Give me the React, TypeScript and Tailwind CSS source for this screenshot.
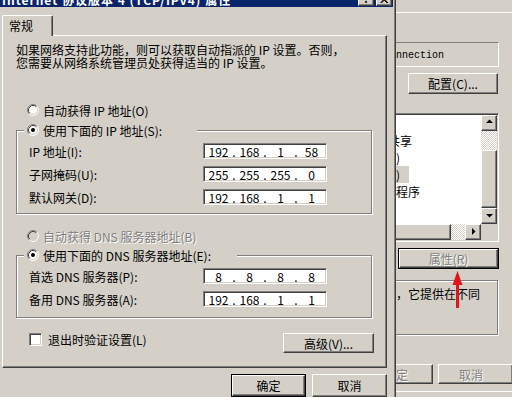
import React from "react";

const SUNKEN =
  "border border-t-[#808080] border-l-[#808080] border-b-white border-r-white shadow-[inset_1px_1px_0_#404040,inset_-1px_-1px_0_#d4d0c8]";
const RAISED =
  "border border-t-white border-l-white border-b-[#404040] border-r-[#404040] shadow-[inset_-1px_-1px_0_#808080,inset_1px_1px_0_#d4d0c8]";
const ETCHED = "border border-[#808080] shadow-[inset_1px_1px_0_#fff,1px_1px_0_#fff]";
const DISABLED = "text-[#808080] [text-shadow:1px_1px_0_#fff]";
const HATCH =
  "bg-[image:repeating-conic-gradient(#d4d0c8_0_25%,#ffffff_0_50%)] bg-[length:2px_2px]";

function Radio({ checked, disabled }: { checked?: boolean; disabled?: boolean }) {
  return (
    <svg width="12" height="12" viewBox="0 0 12 12" className="shrink-0">
      <circle cx="6" cy="6" r="5" fill={disabled ? "#d4d0c8" : "#fff"} />
      <path d="M2.11 9.89A5.5 5.5 0 0 1 9.89 2.11" fill="none" stroke="#808080" />
      <path d="M9.89 2.11A5.5 5.5 0 0 1 2.11 9.89" fill="none" stroke="#fff" />
      <path d="M2.82 9.18A4.5 4.5 0 0 1 9.18 2.82" fill="none" stroke="#404040" />
      <path d="M9.18 2.82A4.5 4.5 0 0 1 2.82 9.18" fill="none" stroke="#d4d0c8" />
      {checked && <circle cx="6" cy="6" r="2" fill="#000" />}
    </svg>
  );
}

function Button({
  label,
  className = "",
  isDefault,
  disabled,
}: {
  label: React.ReactNode;
  className?: string;
  isDefault?: boolean;
  disabled?: boolean;
}) {
  const inner = (
    <div
      className={`${RAISED} bg-[#d4d0c8] w-full h-full flex items-center justify-center whitespace-nowrap ${
        disabled ? DISABLED : ""
      }`}
    >
      {label}
    </div>
  );
  return isDefault ? (
    <div className={`border border-black shrink-0 ${className}`}>{inner}</div>
  ) : (
    <div className={`shrink-0 ${className}`}>{inner}</div>
  );
}

function IpBox({ parts }: { parts: string[] }) {
  return (
    <div className={`${SUNKEN} w-[124px] h-[16px] bg-white flex items-center px-[1px] shrink-0`}>
      {parts.map((p, i) => (
        <React.Fragment key={i}>
          {i > 0 && <span className="w-[4px] text-center">.</span>}
          <span className="w-[27px] text-center">{p}</span>
        </React.Fragment>
      ))}
    </div>
  );
}

function FieldRow({ label, parts }: { label: string; parts: string[] }) {
  return (
    <div className="h-[16px] flex items-center pl-[12px]">
      <span className="w-[174px] whitespace-nowrap">{label}</span>
      <IpBox parts={parts} />
    </div>
  );
}

function Arrow({ dir }: { dir: "up" | "down" | "right" }) {
  const pts =
    dir === "up" ? "4,7 11,7 7.5,3.5" : dir === "down" ? "4,5 11,5 7.5,8.5" : "6,3 6,10 9.5,6.5";
  return (
    <div className={`${RAISED} bg-[#d4d0c8] w-[16px] h-[16px] shrink-0`}>
      <svg width="14" height="14" viewBox="0 0 14 14">
        <polygon points={pts} fill="#000" />
      </svg>
    </div>
  );
}

export default function App() {
  return (
    <div className="relative w-[512px] h-[397px] overflow-hidden bg-[#d4d0c8] flex font-['Noto_Sans_CJK_SC','Liberation_Sans',sans-serif] text-[12px] leading-[13px] text-black">
      {/* front dialog */}
      <div className="w-[396px] h-full shrink-0 flex flex-col shadow-[inset_-1px_0_0_#404040,inset_-2px_0_0_#808080]">
        <div className="w-[393px] h-[10px] bg-[#0a246a] flex items-end justify-between overflow-hidden pl-[2px] pr-[1px]">
          <span className="mb-[1px] leading-[12px] font-bold text-white tracking-[1px] whitespace-nowrap">
            Internet 协议版本 4 (TCP/IPv4) 属性
          </span>
          <div className="flex gap-[2px] mb-[1px]">
            <div className={`${RAISED} bg-[#d4d0c8] w-[16px] h-[14px] flex items-center justify-center text-[10px] leading-[10px] font-bold`}>
              ?
            </div>
            <div className={`${RAISED} bg-[#d4d0c8] w-[16px] h-[14px] flex items-center justify-center`}>
              <svg width="8" height="7" viewBox="0 0 8 7">
                <path d="M0.5 0 L7 7 M1.5 0 L8 7 M7 0 L0.5 7 M8 0 L1.5 7" stroke="#000" strokeWidth="1" />
              </svg>
            </div>
          </div>
        </div>

        <div className="flex flex-col pt-[8px]">
          {/* tab */}
          <div className="relative z-10 ml-[2px] w-[51px] h-[21px] bg-[#d4d0c8] border-l border-t border-white border-r border-r-[#404040] rounded-t-[2px] shadow-[inset_-1px_0_0_#808080] pl-[6px] pt-[3px]">
            常规
          </div>

          {/* panel */}
          <div className="-mt-[1px] ml-[2px] w-[385px] h-[333px] flex flex-col border border-t-white border-l-white border-r-[#404040] border-b-[#404040] shadow-[inset_-1px_-1px_0_#808080] pt-[7px] pl-[13px] pr-[14px]">
            <p className="whitespace-nowrap">
              如果网络支持此功能，则可以获取自动指派的 IP 设置。否则，
              <br />
              您需要从网络系统管理员处获得适当的 IP 设置。
            </p>

            <div className="mt-[33px] ml-[11px] h-[16px] flex items-center gap-[4px]">
              <Radio />
              <span>自动获得 IP 地址(O)</span>
            </div>

            <div className={`${ETCHED} mt-[12px] flex flex-col pb-[8px]`}>
              <div className="-mt-[9px] ml-[7px] w-[173px] h-[16px] bg-[#d4d0c8] pl-[3px] flex items-center gap-[4px]">
                <Radio checked />
                <span className="whitespace-nowrap">使用下面的 IP 地址(S):</span>
              </div>
              <div className="mt-[5px] flex flex-col gap-[7px]">
                <FieldRow label="IP 地址(I):" parts={["192", "168", "1", "58"]} />
                <FieldRow label="子网掩码(U):" parts={["255", "255", "255", "0"]} />
                <FieldRow label="默认网关(D):" parts={["192", "168", "1", "1"]} />
              </div>
            </div>

            <div className="mt-[14px] ml-[11px] h-[16px] flex items-center gap-[4px]">
              <Radio disabled />
              <span className={DISABLED}>自动获得 DNS 服务器地址(B)</span>
            </div>

            <div className={`${ETCHED} mt-[11px] flex flex-col pb-[10px]`}>
              <div className="-mt-[9px] ml-[7px] w-[213px] h-[16px] bg-[#d4d0c8] pl-[3px] flex items-center gap-[4px]">
                <Radio checked />
                <span className="whitespace-nowrap">使用下面的 DNS 服务器地址(E):</span>
              </div>
              <div className="mt-[5px] flex flex-col gap-[7px]">
                <FieldRow label="首选 DNS 服务器(P):" parts={["8", "8", "8", "8"]} />
                <FieldRow label="备用 DNS 服务器(A):" parts={["192", "168", "1", "1"]} />
              </div>
            </div>

            <div className="mt-[15px] flex items-start justify-between">
              <div className="ml-[13px] flex items-center gap-[6px]">
                <div className={`${SUNKEN} w-[13px] h-[13px] bg-white`} />
                <span>退出时验证设置(L)</span>
              </div>
              <Button label="高级(V)..." className="w-[91px] h-[20px] -mr-[2px]" />
            </div>
          </div>

          <div className="mt-[6px] pr-[9px] flex justify-end gap-[6px]">
            <Button label="确定" isDefault className="w-[75px] h-[23px]" />
            <Button label="取消" className="w-[75px] h-[23px]" />
          </div>
        </div>
      </div>

      {/* background dialog */}
      <div className="w-[116px] h-full shrink-0 flex flex-col overflow-hidden">
        <div className="mt-[12px] border-t border-white" />

        <div className="mt-[29px] w-[103px] h-[25px] shrink-0 border-t border-t-[#808080] border-r border-r-white border-b border-b-white pt-[3px]">
          <span className="font-['Liberation_Mono',monospace] text-[10px] leading-[12px] whitespace-nowrap">
            nnection
          </span>
        </div>

        <Button label="配置(C)..." className="mt-[6px] ml-[12px] w-[90px] h-[21px]" />

        <div className="mt-[19px] w-[103px] h-[129px] shrink-0 flex flex-col border-t border-t-[#808080] border-r border-r-white border-b border-b-white shadow-[inset_0_1px_0_#404040,inset_-1px_-1px_0_#d4d0c8] pt-[1px] pr-[1px] pb-[1px]">
          <div className="h-[109px] flex">
            <div className="w-[85px] bg-white flex flex-col overflow-hidden">
              <div className="h-[17px]" />
              <div className="h-[17px] flex items-center whitespace-nowrap -ml-[8px]">共享</div>
              <div className="h-[17px] flex items-center">)</div>
              <div className="h-[17px] flex items-center">
                <span className="w-[13px] h-[17px] flex items-center bg-[#d4d0c8]">)</span>
              </div>
              <div className="h-[17px] flex items-center whitespace-nowrap">程序</div>
            </div>
            <div className="w-[16px] flex flex-col">
              <Arrow dir="up" />
              <div className={`${HATCH} h-[19px]`} />
              <div className={`${RAISED} bg-[#d4d0c8] h-[58px]`} />
              <Arrow dir="down" />
            </div>
          </div>
          <div className="h-[16px] flex">
            <div className={`${RAISED} border-l-0 bg-[#d4d0c8] w-[55px] h-[16px]`} />
            <div className={`${HATCH} w-[14px] h-[16px]`} />
            <Arrow dir="right" />
            <div className="w-[16px] h-[16px] bg-[#d4d0c8]" />
          </div>
        </div>

        <Button label="属性(R)" isDefault disabled className="mt-[6px] ml-[2px] w-[101px] h-[21px]" />

        <div className="mt-[11px] w-[102px] h-[55px] shrink-0 border-t border-r border-b border-[#808080] shadow-[inset_0_1px_0_#fff,1px_1px_0_#fff] pt-[6px] whitespace-nowrap">
          ，它提供在不同
        </div>

        <div className="mt-[29px] flex gap-[5px]">
          <div className="w-[37px] h-[20px] shrink-0">
            <div className={`${RAISED} border-l-0 bg-[#d4d0c8] w-full h-full flex items-center ${DISABLED}`}>定</div>
          </div>
          <div className="w-[75px] h-[20px] shrink-0">
            <div className={`${RAISED} bg-[#d4d0c8] w-full h-full flex items-center pl-[20px] ${DISABLED}`}>取消</div>
          </div>
        </div>

        <div className="mt-[7px] border-t border-white" />
      </div>

      {/* red arrow annotation */}
      <svg className="absolute left-[450px] top-[268px]" width="16" height="44" viewBox="0 0 16 44">
        <polygon points="7.5,3 2.5,17 12.5,17" fill="#e3141c" />
        <line x1="7.5" y1="15" x2="7.5" y2="40" stroke="#e3141c" strokeWidth="3" />
      </svg>
    </div>
  );
}
